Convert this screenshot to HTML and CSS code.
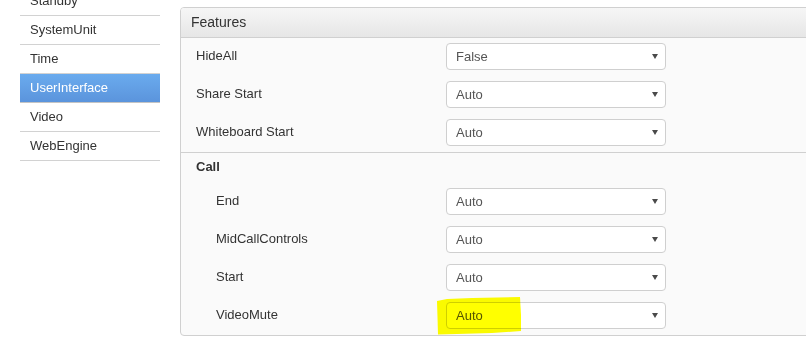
FILE: index.html
```html
<!doctype html>
<html>
<head>
<meta charset="utf-8">
<title>UserInterface</title>
<link rel="stylesheet" href="styles.css">
</head>
<body>
<div class="page">
	<ul class="menu">
		<li>Standby</li>
		<li>SystemUnit</li>
		<li>Time</li>
		<li class="on">UserInterface</li>
		<li>Video</li>
		<li>WebEngine</li>
	</ul>
	<div class="panel">
		<div class="panel-head">Features</div>
		<div class="row">
			<div class="label">HideAll</div>
			<div class="select"><span>False</span><svg width="6" height="5" viewBox="0 0 6 5"><path d="M0 0H6L3 5Z"/></svg></div>
		</div>
		<div class="row">
			<div class="label">Share Start</div>
			<div class="select"><span>Auto</span><svg width="6" height="5" viewBox="0 0 6 5"><path d="M0 0H6L3 5Z"/></svg></div>
		</div>
		<div class="row">
			<div class="label">Whiteboard Start</div>
			<div class="select"><span>Auto</span><svg width="6" height="5" viewBox="0 0 6 5"><path d="M0 0H6L3 5Z"/></svg></div>
		</div>
		<div class="group">
			<div class="group-head">Call</div>
			<div class="row sub">
				<div class="label">End</div>
				<div class="select"><span>Auto</span><svg width="6" height="5" viewBox="0 0 6 5"><path d="M0 0H6L3 5Z"/></svg></div>
			</div>
			<div class="row sub">
				<div class="label">MidCallControls</div>
				<div class="select"><span>Auto</span><svg width="6" height="5" viewBox="0 0 6 5"><path d="M0 0H6L3 5Z"/></svg></div>
			</div>
			<div class="row sub">
				<div class="label">Start</div>
				<div class="select"><span>Auto</span><svg width="6" height="5" viewBox="0 0 6 5"><path d="M0 0H6L3 5Z"/></svg></div>
			</div>
			<div class="row sub mark">
				<div class="label">VideoMute</div>
				<div class="select"><span>Auto</span><svg width="6" height="5" viewBox="0 0 6 5"><path d="M0 0H6L3 5Z"/></svg></div>
				<svg class="marker" width="90" height="42" viewBox="0 0 90 42"><path d="M0 4 L10 2 L35 1 L83 0 L84 18 L84 34 L55 36 L20 37 L1 37.5 Z"/></svg>
			</div>
		</div>
	</div>
</div>
</body>
</html>
```

FILE: styles.css
```css
*{
	margin:0px;
	padding:0px;
	box-sizing:border-box;
}
html,body{
	background:#fff;
	overflow:hidden;
}
body{
	font-family:"Liberation Sans",Arial,sans-serif;
	font-size:13px;
	color:#333;
}
.page{
	display:flex;
	align-items:flex-start;
	width:900px;
}
.menu{
	list-style:none;
	width:140px;
	margin-left:20px;
	margin-top:-13px;
}
.menu li{
	height:29px;
	line-height:28px;
	padding-left:10px;
	border-bottom:1px solid #d2d2d2;
}
.menu li.on{
	color:#fff;
	background:linear-gradient(#6aabee,#5b94dc);
	border-bottom-color:#c4c4c4;
}
.panel{
	width:660px;
	margin-left:20px;
	margin-top:7px;
	border:1px solid #d0d0d0;
	border-radius:4px;
	background:#fafafa;
}
.panel-head{
	height:30px;
	line-height:29px;
	padding-left:10px;
	font-size:14px;
	background:linear-gradient(#f6f6f6,#e6e6e6);
	border-bottom:1px solid #d0d0d0;
	border-radius:3px 3px 0 0;
}
.row{
	display:flex;
	height:38px;
	padding-top:5px;
	position:relative;
}
.label{
	width:265px;
	padding-left:15px;
	line-height:25px;
}
.row.sub .label{
	padding-left:35px;
}
.select{
	width:220px;
	height:27px;
	border:1px solid #cfcfcf;
	border-radius:4px;
	background:#fff;
	display:flex;
	align-items:center;
	justify-content:space-between;
	padding:0 7px 0 9px;
	color:#555;
}
.select svg{
	fill:#4a4a4a;
}
.group{
	border-top:1px solid #d0d0d0;
}
.group-head{
	height:30px;
	line-height:28px;
	padding-left:15px;
	font-weight:bold;
}
.marker{
	position:absolute;
	left:256px;
	top:0px;
	mix-blend-mode:multiply;
	fill:#ffff00;
}
```
